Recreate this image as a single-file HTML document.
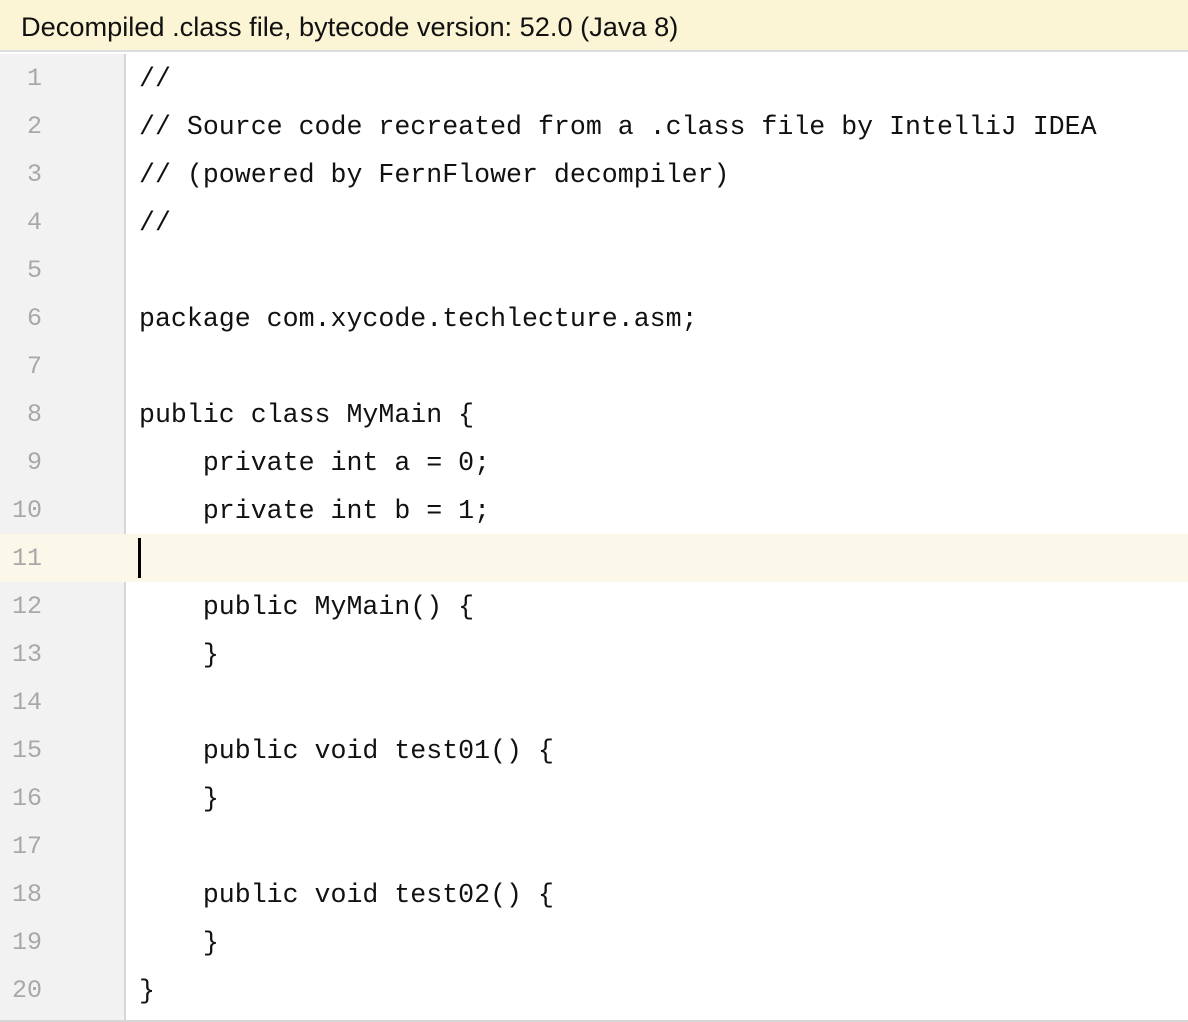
<!DOCTYPE html>
<html><head><style>
body{margin:0;width:1188px;height:1022px;background:#fff;overflow:hidden;position:relative;font-family:"Liberation Mono",monospace;}
.banner{position:absolute;left:0;top:0;width:1188px;height:52px;background:#fbf5d5;border-bottom:2px solid #ddd;font-family:"Liberation Sans",sans-serif;font-size:27.2px;line-height:54px;color:#111;padding-left:21px;box-sizing:border-box;}
.gutter{position:absolute;left:0;top:54px;width:124px;height:966px;background:#f2f2f2;border-right:2px solid #d6d6d6;}
.bottom{position:absolute;left:0;top:1020px;width:1188px;height:2px;background:#d6d6d6;}
.hl{position:absolute;left:0;top:534px;width:1188px;height:48px;background:#fbf8ea;}
.ln{position:absolute;left:0;width:42px;text-align:right;font-size:25px;color:#a8a8a8;line-height:50px;}
.code{position:absolute;left:139px;font-size:26.6px;color:#111;line-height:48px;white-space:pre;top:1px;}
.cur{position:absolute;left:138px;top:538px;width:3px;height:40px;background:#000;}
</style></head><body>
<div class="banner">Decompiled .class file, bytecode version: 52.0 (Java 8)</div>
<div class="gutter"></div>
<div class="hl"></div>
<div class="bottom"></div>
<div class="cur"></div>
<div class="ln" style="top:54px">1</div>
<div class="ln" style="top:102px">2</div>
<div class="ln" style="top:150px">3</div>
<div class="ln" style="top:198px">4</div>
<div class="ln" style="top:246px">5</div>
<div class="ln" style="top:294px">6</div>
<div class="ln" style="top:342px">7</div>
<div class="ln" style="top:390px">8</div>
<div class="ln" style="top:438px">9</div>
<div class="ln" style="top:486px">10</div>
<div class="ln" style="top:534px">11</div>
<div class="ln" style="top:582px">12</div>
<div class="ln" style="top:630px">13</div>
<div class="ln" style="top:678px">14</div>
<div class="ln" style="top:726px">15</div>
<div class="ln" style="top:774px">16</div>
<div class="ln" style="top:822px">17</div>
<div class="ln" style="top:870px">18</div>
<div class="ln" style="top:918px">19</div>
<div class="ln" style="top:966px">20</div>
<div class="code" style="top:55px">//
// Source code recreated from a .class file by IntelliJ IDEA
// (powered by FernFlower decompiler)
//

package com.xycode.techlecture.asm;

public class MyMain {
    private int a = 0;
    private int b = 1;

    public MyMain() {
    }

    public void test01() {
    }

    public void test02() {
    }
}</div>
</body></html>
